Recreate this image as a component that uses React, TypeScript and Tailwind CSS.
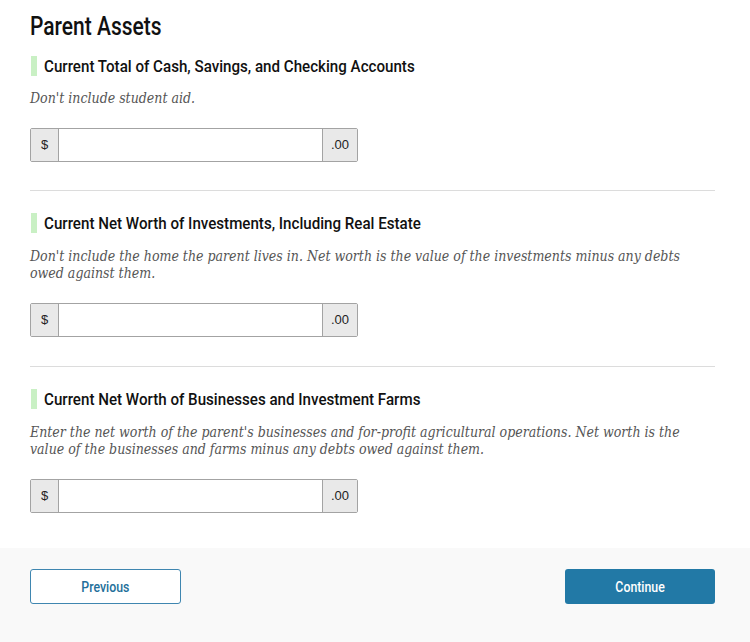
const sections = [
    {
        title: 'Current Total of Cash, Savings, and Checking Accounts',
        hint: "Don't include student aid.",
    },
    {
        title: 'Current Net Worth of Investments, Including Real Estate',
        hint: "Don't include the home the parent lives in. Net worth is the value of the investments minus any debts owed against them.",
    },
    {
        title: 'Current Net Worth of Businesses and Investment Farms',
        hint: "Enter the net worth of the parent's businesses and for-profit agricultural operations. Net worth is the value of the businesses and farms minus any debts owed against them.",
    },
]

const headFont = "font-['Roboto',sans-serif]"

function MoneyInput() {
    return (
        <div className="flex h-[34px] w-[328px] border border-[#a3a3a3] rounded-[2px] font-['Liberation_Sans',sans-serif] text-[13px] text-[#222]">
            <span className="flex w-[28px] items-center justify-center bg-[#e9e9e9] border-r border-[#a3a3a3]">$</span>
            <input className="flex-1 min-w-0 bg-white outline-none px-2" />
            <span className="flex w-[35px] items-center justify-center bg-[#e9e9e9] border-l border-[#a3a3a3]">.00</span>
        </div>
    )
}

export default function App() {
    return (
        <div className="min-h-[642px] w-[750px] flex flex-col bg-white">
            <div className="pl-[30px] pr-[35px] pt-[13px] pb-[35px]">
                <h1 className={`${headFont} text-[25px] leading-[28px] font-medium text-[#111] inline-block origin-left scale-x-[0.84]`}>Parent Assets</h1>
                {sections.map((s, i) => (
                    <div key={i}>
                        {i > 0 && <div className={`h-px bg-[#dcdcdc] mb-[22px] ${i === 1 ? 'mt-[28px]' : 'mt-[29px]'}`} />}
                        <div className={`flex items-center gap-[7px] ${i === 0 ? 'mt-[15px]' : ''}`}>
                            <div className="w-[6px] h-[20px] bg-[#c9f0c4] ml-px shrink-0" />
                            <h2 className={`${headFont} text-[17px] leading-[20px] font-medium text-[#111] whitespace-nowrap origin-left scale-x-[0.89]`}>{s.title}</h2>
                        </div>
                        <p className={`${i === 0 ? 'mt-[14px]' : 'mt-[15px]'} font-['DejaVu_Serif_Condensed','DejaVu_Serif',serif] italic text-[14px] leading-[17px] text-[#555] pr-[30px]`}>
                            {s.hint}
                        </p>
                        <div className="mt-[21px]">
                            <MoneyInput />
                        </div>
                    </div>
                ))}
            </div>
            <div className="flex-1 bg-[#f9f9f9] pl-[30px] pr-[35px] pt-[21px] flex justify-between items-start">
                <button className={`${headFont} w-[151px] h-[35px] pt-[2px] rounded-[3px] border border-[#3f86b0] bg-white text-[14px] font-medium text-[#236f9a]`}>
                    <span className="inline-block scale-x-[0.88]">Previous</span>
                </button>
                <button className={`${headFont} w-[150px] h-[35px] pt-[2px] rounded-[3px] bg-[#2279a6] text-[14px] font-medium text-white`}>
                    <span className="inline-block scale-x-[0.88]">Continue</span>
                </button>
            </div>
        </div>
    )
}
